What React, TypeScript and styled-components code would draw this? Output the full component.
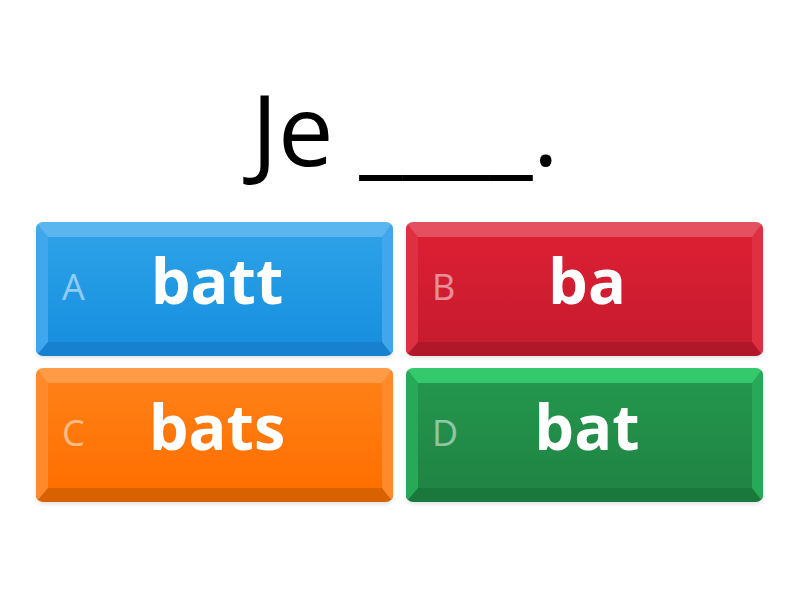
import React from 'react';
import styled, { createGlobalStyle } from 'styled-components';

type Tone = {
  top: string;
  side: string;
  bottom: string;
  faceTop: string;
  faceBottom: string;
};

const tones: Record<string, Tone> = {
  blue: {
    top: '#5bb5ef',
    side: '#40a7ec',
    bottom: '#1781cf',
    faceTop: '#2ca1e8',
    faceBottom: '#1890de',
  },
  red: {
    top: '#e4505f',
    side: '#df3043',
    bottom: '#b0182a',
    faceTop: '#dc1f33',
    faceBottom: '#c71b2e',
  },
  orange: {
    top: '#ff9a47',
    side: '#ff8a2c',
    bottom: '#d96200',
    faceTop: '#ff8016',
    faceBottom: '#ff6f00',
  },
  green: {
    top: '#34c96c',
    side: '#28a859',
    bottom: '#1b783d',
    faceTop: '#24964d',
    faceBottom: '#1f8444',
  },
};

const answers = [
  { letter: 'A', text: 'batt', tone: 'blue' },
  { letter: 'B', text: 'ba', tone: 'red' },
  { letter: 'C', text: 'bats', tone: 'orange' },
  { letter: 'D', text: 'bat', tone: 'green' },
];

const GlobalStyle = createGlobalStyle`
  html, body {
    margin: 0;
    padding: 0;
    background: #ffffff;
  }
  body {
    font-family: "Open Sans", "Noto Sans", sans-serif;
  }
`;

const Page = styled.div`
  width: 800px;
  height: 600px;
  display: flex;
  flex-direction: column;
  align-items: stretch;
`;

const Question = styled.h1`
  margin: 0;
  padding-top: 79px;
  padding-left: 10px;
  height: 98px;
  font-size: 99px;
  line-height: 98px;
  font-weight: 400;
  color: #000;
  text-align: center;
  white-space: pre;
`;

const Grid = styled.div`
  margin-top: 45px;
  padding: 0 37px 0 36px;
  display: grid;
  grid-template-columns: 357px 357px;
  grid-auto-rows: 134px;
  column-gap: 13px;
  row-gap: 12px;
`;

const Tile = styled.div<{ $tone: Tone }>`
  box-sizing: border-box;
  display: flex;
  align-items: center;
  position: relative;
  border-radius: 7px;
  border-style: solid;
  border-width: 15px 11px 14px 12px;
  border-color: ${(p) => p.$tone.top} ${(p) => p.$tone.side}
    ${(p) => p.$tone.bottom} ${(p) => p.$tone.side};
  background: linear-gradient(
    to bottom,
    ${(p) => p.$tone.faceTop},
    ${(p) => p.$tone.faceBottom}
  );
  box-shadow: 0 2px 4px rgba(0, 0, 0, 0.12);
  color: #fff;
`;

const Letter = styled.span`
  position: absolute;
  left: 14px;
  top: 50%;
  transform: translateY(-58%);
  font-size: 36px;
  font-weight: 400;
  opacity: 0.5;
`;

const Word = styled.span`
  flex: 1;
  text-align: center;
  font-size: 63px;
  font-weight: 700;
  line-height: 1;
  padding-left: 4px;
  margin-top: -20px;
`;

export default function App() {
  return (
    <Page>
      <GlobalStyle />
      <Question>Je ____.</Question>
      <Grid>
        {answers.map((a) => (
          <Tile key={a.letter} $tone={tones[a.tone]}>
            <Letter>{a.letter}</Letter>
            <Word>{a.text}</Word>
          </Tile>
        ))}
      </Grid>
    </Page>
  );
}
